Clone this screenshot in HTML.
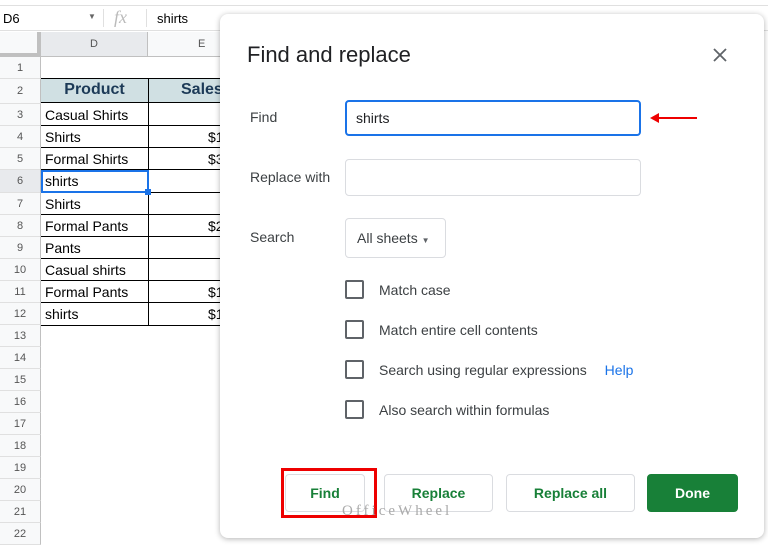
<!DOCTYPE html>
<html><head><style>
*{box-sizing:border-box;margin:0;padding:0}
body{width:768px;height:550px;overflow:hidden;background:#fff;font-family:"Liberation Sans",Arial,sans-serif;position:relative}
.abs{position:absolute}
.rh{position:absolute;left:0;width:41px;background:#f8f9fa;border-bottom:1px solid #e0e0e0;border-right:1px solid #c0c0c0;color:#555;font-size:11px;text-align:center}
.cell{position:absolute;font-size:14px;color:#000;padding-left:4px;border-bottom:1px solid #000}
.btn{position:absolute;height:38px;border:1px solid #dadce0;border-radius:4px;color:#188038;font-size:14px;font-weight:bold;display:flex;align-items:center;justify-content:center;background:#fff}
.cb{position:absolute;left:345px;width:19px;height:19px;border:2px solid #5f6368;border-radius:2px}
.cl{position:absolute;left:379px;font-size:14px;color:#3c4043}
</style></head><body>
<div class="abs" style="left:0;top:0;width:768px;height:6px;border-bottom:1px solid #e0e0e0"></div>
<div class="abs" style="left:0;top:7px;width:768px;height:24px;border-bottom:1px solid #e0e0e0;font-size:13px">
<span class="abs" style="left:3px;top:4px">D6</span>
<span class="abs" style="left:88px;top:5px;font-size:8px;color:#666">▼</span>
<div class="abs" style="left:103px;top:2px;width:1px;height:18px;background:#e0e0e0"></div>
<span class="abs" style="left:114px;top:0px;font-family:'Liberation Serif',serif;font-style:italic;font-size:18px;color:#bbb">fx</span>
<div class="abs" style="left:146px;top:2px;width:1px;height:18px;background:#e0e0e0"></div>
<span class="abs" style="left:157px;top:4px">shirts</span>
</div>
<div class="abs" style="left:0;top:32px;width:41px;height:25px;background:#f8f9fa;border-right:4px solid #c0c0c0;border-bottom:4px solid #c0c0c0"></div>
<div class="abs" style="left:41px;top:32px;width:107px;height:25px;background:#e8eaed;border-right:1px solid #c0c0c0;border-bottom:1px solid #c0c0c0;font-size:11px;color:#555;text-align:center;line-height:24px">D</div>
<div class="abs" style="left:148px;top:32px;width:120px;height:25px;background:#f8f9fa;border-bottom:1px solid #c0c0c0;font-size:11px;color:#555;line-height:24px;padding-left:50px">E</div>

<div class="rh" style="top:57px;height:22px;line-height:22px">1</div>
<div class="rh" style="top:79px;height:25px;line-height:25px">2</div>
<div class="rh" style="top:104px;height:22px;line-height:22px">3</div>
<div class="rh" style="top:126px;height:22px;line-height:22px">4</div>
<div class="rh" style="top:148px;height:22px;line-height:22px">5</div>
<div class="rh" style="top:170px;height:23px;line-height:23px;background:#e8eaed">6</div>
<div class="rh" style="top:193px;height:22px;line-height:22px">7</div>
<div class="rh" style="top:215px;height:22px;line-height:22px">8</div>
<div class="rh" style="top:237px;height:22px;line-height:22px">9</div>
<div class="rh" style="top:259px;height:22px;line-height:22px">10</div>
<div class="rh" style="top:281px;height:22px;line-height:22px">11</div>
<div class="rh" style="top:303px;height:22px;line-height:22px">12</div>
<div class="rh" style="top:325px;height:22px;line-height:22px">13</div>
<div class="rh" style="top:347px;height:22px;line-height:22px">14</div>
<div class="rh" style="top:369px;height:22px;line-height:22px">15</div>
<div class="rh" style="top:391px;height:22px;line-height:22px">16</div>
<div class="rh" style="top:413px;height:22px;line-height:22px">17</div>
<div class="rh" style="top:435px;height:22px;line-height:22px">18</div>
<div class="rh" style="top:457px;height:22px;line-height:22px">19</div>
<div class="rh" style="top:479px;height:22px;line-height:22px">20</div>
<div class="rh" style="top:501px;height:22px;line-height:22px">21</div>
<div class="rh" style="top:523px;height:22px;line-height:22px">22</div>

<div class="abs" style="left:41px;top:78px;width:230px;height:25px;background:#d0e0e3;border-top:1px solid #000;border-bottom:1px solid #000"></div>
<div class="abs" style="left:41px;top:81px;width:107px;text-align:center;font-weight:bold;font-size:16px;color:#1c3a57">Product</div>
<div class="abs" style="left:181px;top:81px;font-weight:bold;font-size:16px;color:#1c3a57">Sales</div>
<div class="abs" style="left:148px;top:78px;width:1px;height:248px;background:#000"></div>

<div class="cell" style="left:41px;top:104px;width:230px;height:22px;line-height:23px">Casual Shirts</div>
<div class="cell" style="left:41px;top:126px;width:230px;height:22px;line-height:23px">Shirts<span class="abs" style="left:167px">$1</span></div>
<div class="cell" style="left:41px;top:148px;width:230px;height:22px;line-height:23px">Formal Shirts<span class="abs" style="left:167px">$3</span></div>
<div class="cell" style="left:41px;top:170px;width:230px;height:23px;line-height:23px">shirts</div>
<div class="abs" style="left:41px;top:170px;width:108px;height:23px;border:2px solid #1a73e8"></div>
<div class="abs" style="left:145px;top:189px;width:6px;height:6px;background:#1a73e8"></div>
<div class="cell" style="left:41px;top:193px;width:230px;height:22px;line-height:23px">Shirts</div>
<div class="cell" style="left:41px;top:215px;width:230px;height:22px;line-height:23px">Formal Pants<span class="abs" style="left:167px">$2</span></div>
<div class="cell" style="left:41px;top:237px;width:230px;height:22px;line-height:23px">Pants</div>
<div class="cell" style="left:41px;top:259px;width:230px;height:22px;line-height:23px">Casual shirts</div>
<div class="cell" style="left:41px;top:281px;width:230px;height:22px;line-height:23px">Formal Pants<span class="abs" style="left:167px">$1</span></div>
<div class="cell" style="left:41px;top:303px;width:230px;height:23px;line-height:23px">shirts<span class="abs" style="left:167px">$1</span></div>

<div class="abs" style="left:220px;top:14px;width:544px;height:524px;background:#fff;border-radius:8px;box-shadow:0 1px 6px rgba(0,0,0,.3)"></div>
<div class="abs" style="left:247px;top:42px;font-size:22px;color:#202124">Find and replace</div>
<svg class="abs" style="left:713px;top:48px" width="14" height="14"><path d="M1 1L13 13M13 1L1 13" stroke="#5f6368" stroke-width="1.8"/></svg>
<div class="abs" style="left:250px;top:109px;font-size:14px;color:#3c4043">Find</div>
<div class="abs" style="left:345px;top:100px;width:296px;height:36px;border:2px solid #1a73e8;border-radius:4px;font-size:14px;padding:8px 9px;color:#202124">shirts</div>
<div class="abs" style="left:655px;top:117px;width:42px;height:2px;background:#e00"></div>
<div class="abs" style="left:650px;top:113px;width:0;height:0;border-top:5px solid transparent;border-bottom:5px solid transparent;border-right:9px solid #e00"></div>
<div class="abs" style="left:250px;top:169px;font-size:14px;color:#3c4043">Replace with</div>
<div class="abs" style="left:345px;top:159px;width:296px;height:37px;border:1px solid #dadce0;border-radius:4px"></div>
<div class="abs" style="left:250px;top:229px;font-size:14px;color:#3c4043">Search</div>
<div class="abs" style="left:345px;top:218px;width:101px;height:40px;border:1px solid #dadce0;border-radius:4px;font-size:14px;color:#3c4043;padding:11px 11px">All sheets <span style="font-size:8px;color:#5f6368">▼</span></div>
<div class="cb" style="top:280px"></div><div class="cl" style="top:282px">Match case</div>
<div class="cb" style="top:320px"></div><div class="cl" style="top:322px">Match entire cell contents</div>
<div class="cb" style="top:360px"></div><div class="cl" style="top:362px">Search using regular expressions <span style="color:#1a73e8;margin-left:14px">Help</span></div>
<div class="cb" style="top:400px"></div><div class="cl" style="top:402px">Also search within formulas</div>

<div class="btn" style="left:285px;top:474px;width:80px">Find</div>
<div class="abs" style="left:281px;top:468px;width:96px;height:50px;border:3px solid #e00"></div>
<div class="btn" style="left:384px;top:474px;width:109px">Replace</div>
<div class="btn" style="left:506px;top:474px;width:129px">Replace all</div>
<div class="btn" style="left:647px;top:474px;width:91px;background:#188038;border-color:#188038;color:#fff">Done</div>
<div class="abs" style="left:342px;top:503px;font-family:'Liberation Serif',serif;font-size:15px;letter-spacing:3px;color:#aaa">OfficeWheel</div>
</body></html>
